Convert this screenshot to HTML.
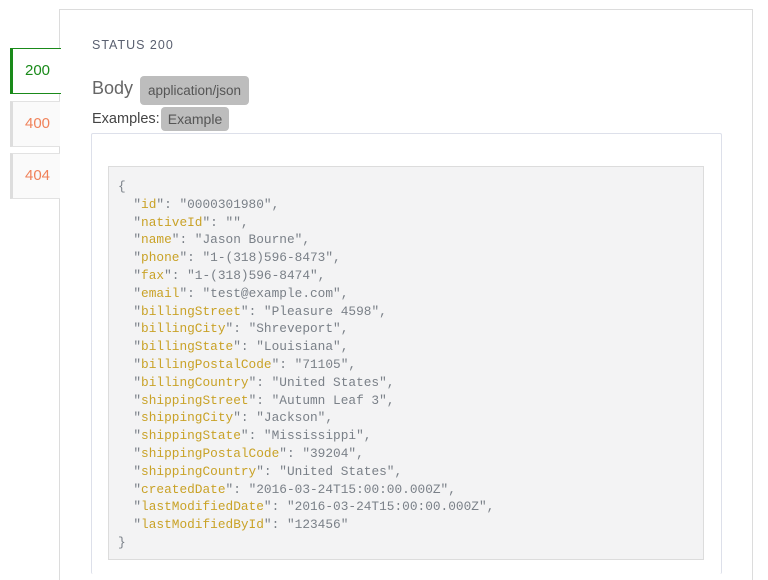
<!DOCTYPE html>
<html><head><style>
body{margin:0;width:768px;height:580px;background:#fff;position:relative;overflow:hidden;font-family:"Liberation Sans",sans-serif;}
.panel{position:absolute;left:59px;top:9px;width:692px;height:570px;border:1px solid #dcdcdc;border-bottom:none;background:#fff;}
.tab{position:absolute;left:10px;width:50px;height:46px;background:#fafafa;border:1px solid #e2e2e2;border-left:3px solid #ddd;border-right:none;box-sizing:border-box;font-size:15px;line-height:44px;padding-left:12px;color:#f0825a;}
.tab.a{background:#fff;border:1px solid #1a8a1a;border-left:3px solid #1a8a1a;border-right:none;color:#1a8a1a;z-index:2;width:51px;}
.status{position:absolute;left:92px;top:38px;font-size:12.5px;letter-spacing:1px;color:#5a6070;}
.body{position:absolute;left:92px;top:78px;font-size:18px;color:#666;}
.badge{position:absolute;background:#bdbdbd;border-radius:4px;color:#555;font-size:13.5px;}
.ex{position:absolute;left:92px;top:111px;font-size:14.5px;color:#444;}
.outer{position:absolute;left:91px;top:133px;width:629px;height:440px;border:1px solid #dde0ea;border-bottom:none;border-radius:2px;}
.pre{position:absolute;left:108px;top:166px;width:596px;height:394px;background:#f3f3f4;border:1px solid #dcdcdc;box-sizing:border-box;}
pre{margin:0;position:absolute;left:9px;top:11px;font-family:"Liberation Mono",monospace;font-size:12.8px;line-height:17.8px;color:#7a8088;}
.k{color:#c9a227;}
</style></head><body>
<div class="panel"></div>
<div class="tab a" style="top:48px">200</div>
<div class="tab" style="top:101px">400</div>
<div class="tab" style="top:153px">404</div>
<div class="status">STATUS 200</div>
<div class="body">Body</div>
<div class="badge" style="left:140px;top:76px;width:109px;height:29px;line-height:29px;text-align:center">application/json</div>
<div class="ex">Examples:</div>
<div class="badge" style="left:161px;top:107px;width:68px;height:24px;line-height:24px;text-align:center;font-size:14px">Example</div>
<div class="outer"></div>
<div class="pre"><pre>{
  "<span class="k">id</span>": "0000301980",
  "<span class="k">nativeId</span>": "",
  "<span class="k">name</span>": "Jason Bourne",
  "<span class="k">phone</span>": "1-(318)596-8473",
  "<span class="k">fax</span>": "1-(318)596-8474",
  "<span class="k">email</span>": "test@example.com",
  "<span class="k">billingStreet</span>": "Pleasure 4598",
  "<span class="k">billingCity</span>": "Shreveport",
  "<span class="k">billingState</span>": "Louisiana",
  "<span class="k">billingPostalCode</span>": "71105",
  "<span class="k">billingCountry</span>": "United States",
  "<span class="k">shippingStreet</span>": "Autumn Leaf 3",
  "<span class="k">shippingCity</span>": "Jackson",
  "<span class="k">shippingState</span>": "Mississippi",
  "<span class="k">shippingPostalCode</span>": "39204",
  "<span class="k">shippingCountry</span>": "United States",
  "<span class="k">createdDate</span>": "2016-03-24T15:00:00.000Z",
  "<span class="k">lastModifiedDate</span>": "2016-03-24T15:00:00.000Z",
  "<span class="k">lastModifiedById</span>": "123456"
}</pre></div>
</body></html>
